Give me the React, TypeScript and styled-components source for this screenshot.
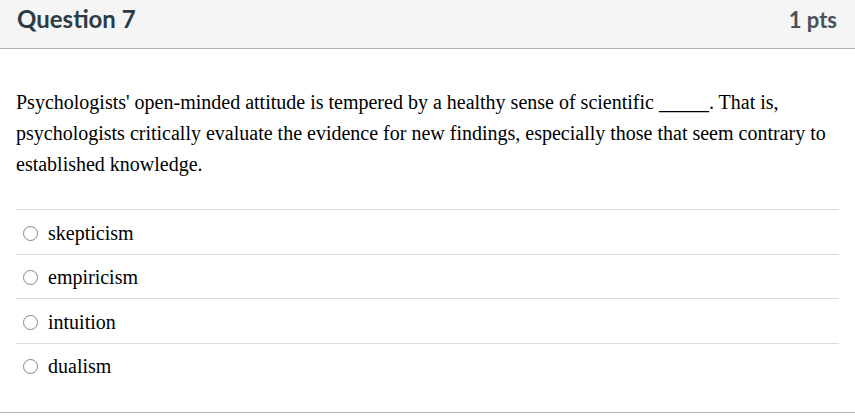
import React from 'react';
import styled, { createGlobalStyle } from 'styled-components';

const GlobalStyle = createGlobalStyle`
  body {
    margin: 0;
    background: #ffffff;
    font-family: Lato, 'Liberation Sans', sans-serif;
  }
`;

const Card = styled.div`
  width: 855px;
  border-bottom: 1px solid #aeb2b5;
`;

const Header = styled.div`
  height: 49px;
  background: #f5f5f5;
  border-bottom: 1px solid #aeb2b5;
  display: flex;
  align-items: baseline;
  justify-content: space-between;
  padding: 4px 18px 0 17px;
  box-sizing: border-box;
`;

const Title = styled.div`
  font-family: Lato, sans-serif;
  font-weight: 700;
  font-size: 24px;
  color: #2d3b45;
`;

const Points = styled.div`
  font-family: Lato, sans-serif;
  font-weight: 700;
  font-size: 22px;
  color: #4a5259;
`;

const Body = styled.div`
  padding: 38px 16px 25px 16px;
`;

const QuestionText = styled.p`
  margin: 0 0 29px 0;
  font-family: "Liberation Serif", "Times New Roman", serif;
  font-size: 20px;
  line-height: 31px;
  color: #000;
`;

const Answers = styled.div`
  display: flex;
  flex-direction: column;
`;

const AnswerRow = styled.label`
  display: flex;
  align-items: center;
  gap: 10px;
  height: 44.5px;
  border-top: 1px solid #dcdcdc;
  padding: 3px 0 0 7px;
  box-sizing: border-box;
  font-family: "Liberation Serif", "Times New Roman", serif;
  font-size: 20px;
  color: #000;
`;

const Radio = styled.span`
  width: 13px;
  height: 13px;
  border: 1px solid #858585;
  border-radius: 50%;
  background: #fff;
  flex-shrink: 0;
`;

const answers = ['skepticism', 'empiricism', 'intuition', 'dualism'];

export default function App() {
  return (
    <>
      <GlobalStyle />
      <Card>
        <Header>
          <Title>Question 7</Title>
          <Points>1 pts</Points>
        </Header>
        <Body>
          <QuestionText>
            Psychologists' open-minded attitude is tempered by a healthy sense of scientific _____. That is,
            psychologists critically evaluate the evidence for new findings, especially those that seem contrary to
            established knowledge.
          </QuestionText>
          <Answers>
            {answers.map(a => (
              <AnswerRow key={a}>
                <Radio />
                {a}
              </AnswerRow>
            ))}
          </Answers>
        </Body>
      </Card>
    </>
  );
}
